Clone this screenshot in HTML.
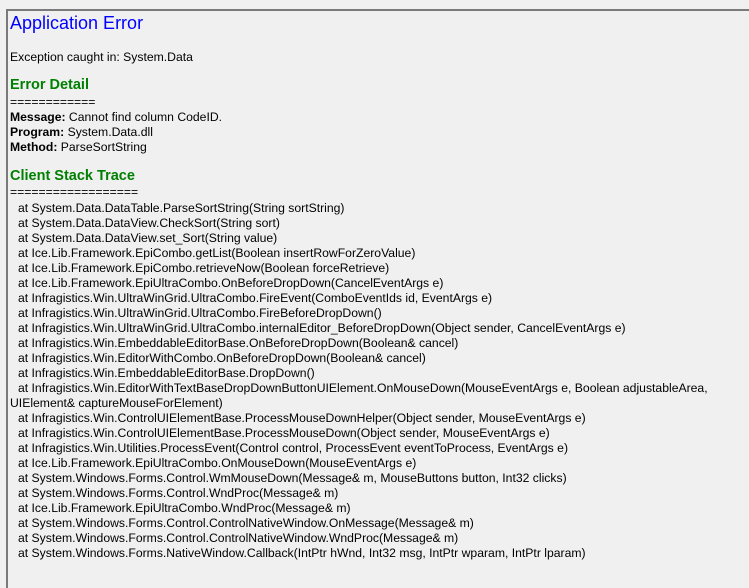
<!DOCTYPE html>
<html><head><style>
html,body{margin:0;width:749px;height:588px;overflow:hidden}
body{background:#f0f0f0;font-family:"Liberation Sans",Arial,sans-serif;font-size:12.2px;color:#000;position:relative}
.box{position:absolute;left:6px;top:9px;width:760px;height:590px;border-left:2px solid #7a7a7a;border-top:2px solid #7a7a7a;}
.l{position:absolute;left:10px;white-space:nowrap;line-height:15px}
h1{position:absolute;left:10px;top:11px;margin:0;font-size:18px;font-weight:normal;color:#0000ff;line-height:24px}
.g{color:#008000;font-weight:bold;font-size:14.5px}
.s{left:18px}
</style></head><body>
<div class="box"></div>
<h1>Application Error</h1>
<div class="l" style="top:50px">Exception caught in: System.Data</div>
<div class="l g" style="top:78px">Error Detail</div>
<div class="l" style="top:95px">============</div>
<div class="l" style="top:110px"><b>Message:</b> Cannot find column CodeID.</div>
<div class="l" style="top:125px"><b>Program:</b> System.Data.dll</div>
<div class="l" style="top:140px"><b>Method:</b> ParseSortString</div>
<div class="l g" style="top:169px">Client Stack Trace</div>
<div class="l" style="top:185px">==================</div>
<div class="l s" style="top:201px">at System.Data.DataTable.ParseSortString(String sortString)</div>
<div class="l s" style="top:216px">at System.Data.DataView.CheckSort(String sort)</div>
<div class="l s" style="top:231px">at System.Data.DataView.set_Sort(String value)</div>
<div class="l s" style="top:246px">at Ice.Lib.Framework.EpiCombo.getList(Boolean insertRowForZeroValue)</div>
<div class="l s" style="top:261px">at Ice.Lib.Framework.EpiCombo.retrieveNow(Boolean forceRetrieve)</div>
<div class="l s" style="top:276px">at Ice.Lib.Framework.EpiUltraCombo.OnBeforeDropDown(CancelEventArgs e)</div>
<div class="l s" style="top:291px">at Infragistics.Win.UltraWinGrid.UltraCombo.FireEvent(ComboEventIds id, EventArgs e)</div>
<div class="l s" style="top:306px">at Infragistics.Win.UltraWinGrid.UltraCombo.FireBeforeDropDown()</div>
<div class="l s" style="top:321px">at Infragistics.Win.UltraWinGrid.UltraCombo.internalEditor_BeforeDropDown(Object sender, CancelEventArgs e)</div>
<div class="l s" style="top:336px">at Infragistics.Win.EmbeddableEditorBase.OnBeforeDropDown(Boolean&amp; cancel)</div>
<div class="l s" style="top:351px">at Infragistics.Win.EditorWithCombo.OnBeforeDropDown(Boolean&amp; cancel)</div>
<div class="l s" style="top:366px">at Infragistics.Win.EmbeddableEditorBase.DropDown()</div>
<div class="l s" style="top:381px">at Infragistics.Win.EditorWithTextBaseDropDownButtonUIElement.OnMouseDown(MouseEventArgs e, Boolean adjustableArea,</div>
<div class="l" style="top:396px">UIElement&amp; captureMouseForElement)</div>
<div class="l s" style="top:411px">at Infragistics.Win.ControlUIElementBase.ProcessMouseDownHelper(Object sender, MouseEventArgs e)</div>
<div class="l s" style="top:426px">at Infragistics.Win.ControlUIElementBase.ProcessMouseDown(Object sender, MouseEventArgs e)</div>
<div class="l s" style="top:441px">at Infragistics.Win.Utilities.ProcessEvent(Control control, ProcessEvent eventToProcess, EventArgs e)</div>
<div class="l s" style="top:456px">at Ice.Lib.Framework.EpiUltraCombo.OnMouseDown(MouseEventArgs e)</div>
<div class="l s" style="top:471px">at System.Windows.Forms.Control.WmMouseDown(Message&amp; m, MouseButtons button, Int32 clicks)</div>
<div class="l s" style="top:486px">at System.Windows.Forms.Control.WndProc(Message&amp; m)</div>
<div class="l s" style="top:501px">at Ice.Lib.Framework.EpiUltraCombo.WndProc(Message&amp; m)</div>
<div class="l s" style="top:516px">at System.Windows.Forms.Control.ControlNativeWindow.OnMessage(Message&amp; m)</div>
<div class="l s" style="top:531px">at System.Windows.Forms.Control.ControlNativeWindow.WndProc(Message&amp; m)</div>
<div class="l s" style="top:546px">at System.Windows.Forms.NativeWindow.Callback(IntPtr hWnd, Int32 msg, IntPtr wparam, IntPtr lparam)</div>
</body></html>
